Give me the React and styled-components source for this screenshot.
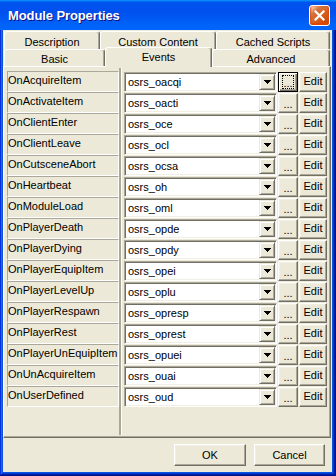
import React from "react";
import styled, { createGlobalStyle, css } from "styled-components";

const GlobalStyle = createGlobalStyle`
  html, body {
    margin: 0;
    padding: 0;
    background: #fff;
  }
  body {
    font-family: "Liberation Sans", Arial, sans-serif;
  }
`;

const raised = css`
  background: #ece9d8;
  border: 1px solid;
  border-color: #fff #716f64 #716f64 #fff;
  box-shadow: inset -1px -1px #aca899, inset 1px 1px #f1efe2;
`;

const Window = styled.div`
  width: 336px;
  height: 476px;
  box-sizing: border-box;
  display: flex;
  flex-direction: column;
  padding: 0 4px 4px 3px;
  background: #0855dd;
  box-shadow: inset -1px -1px #00138c, inset 1px 1px #0831d9,
    inset -2px -2px #001ea0, inset 2px 2px #166aee, inset -3px -3px #003bda;
  font-family: "Liberation Sans", Arial, sans-serif;
  font-size: 11px;
  color: #000;
`;

const TitleBar = styled.div`
  height: 30px;
  flex: none;
  margin: 0 -4px 0 -3px;
  padding: 0 6px 0 8px;
  display: flex;
  align-items: center;
  background: linear-gradient(
    180deg,
    #0997ff,
    #0053ee 8%,
    #0050ee 40%,
    #0062f7 80%,
    #0066ff 100%
  );
`;

const Title = styled.div`
  flex: 1;
  color: #fff;
  font-weight: bold;
  font-size: 13px;
  letter-spacing: -0.1px;
  text-shadow: 1px 1px #0f1089;
  padding-top: 1px;
`;

const CloseButton = styled.div`
  width: 21px;
  height: 21px;
  box-sizing: border-box;
  border: 1px solid #fff;
  border-radius: 3px;
  display: grid;
  place-items: center;
  background: radial-gradient(
    circle at 90% 90%,
    #cc4600 0%,
    #dc6527 55%,
    #cd7546 70%,
    #ffccb2 90%,
    #fff 100%
  );
  box-shadow: inset 0 -1px 2px 1px #da4600;
`;

const Client = styled.div`
  flex: 1;
  display: flex;
  flex-direction: column;
  padding-top: 1px;
  background: #ece9d8;
`;

const TabRow = styled.div`
  display: flex;
  align-items: flex-end;
  height: ${(p) => p.$h}px;
  padding-left: 1px;
`;

const Tab = styled.div`
  box-sizing: border-box;
  width: ${(p) => p.$w}px;
  height: ${(p) => (p.$active ? 20 : p.$h)}px;
  padding-top: 2px;
  line-height: ${(p) => (p.$h === 18 && !p.$active ? 16 : 15)}px;
  background: #ece9d8;
  border-top: 1px solid #fff;
  border-left: 1px solid #fff;
  border-right: 1px solid #716f64;
  border-radius: 3px 3px 0 0;
  box-shadow: inset -1px 0 #aca899;
  text-align: center;
  white-space: nowrap;
  ${(p) =>
    p.$active &&
    css`
      position: relative;
      z-index: 1;
      margin-bottom: -1px;
    `}
`;

const Panel = styled.div`
  box-sizing: border-box;
  height: 372px;
  flex: none;
  margin-right: 1px;
  padding: 1px 0 2px 3px;
  display: flex;
  border-top: 1px solid #fff;
  border-left: 1px solid #fff;
  border-right: 1px solid #716f64;
  border-bottom: 1px solid #716f64;
  box-shadow: inset -1px -1px #aca899;
`;

const LabelColumn = styled.div`
  width: 112px;
  padding-top: 3px;
  display: flex;
  flex-direction: column;
`;

const Splitter = styled.div`
  width: 3px;
  background: linear-gradient(90deg, #aca899 0 2px, #fff 2px 3px);
`;

const ControlColumn = styled.div`
  flex: 1;
  padding: 3px 0 0 2px;
  display: flex;
  flex-direction: column;
`;

const Label = styled.div`
  box-sizing: border-box;
  height: 21px;
  border: 1px solid;
  border-color: #aca899 #fff #fff #aca899;
  line-height: 17px;
  white-space: nowrap;
`;

const ControlRow = styled.div`
  height: 21px;
  box-sizing: border-box;
  padding-top: 1px;
  display: flex;
  gap: 1px;
`;

const Combo = styled.div`
  box-sizing: border-box;
  width: 153px;
  height: 20px;
  display: flex;
  background: #fff;
  border: 1px solid;
  border-color: #aca899 #fff #fff #aca899;
  box-shadow: inset 1px 1px #716f64, inset -1px -1px #f1efe2;
`;

const ComboText = styled.div`
  flex: 1;
  padding: 1px 0 0 3px;
  line-height: 16px;
  white-space: nowrap;
`;

const DropButton = styled.div`
  box-sizing: border-box;
  width: 16px;
  height: 16px;
  margin: 1px 1px 1px 0;
  display: grid;
  place-items: center;
  background: #ece9d8;
  border: 1px solid;
  border-color: #ece9d8 #716f64 #716f64 #ece9d8;
  box-shadow: inset 1px 1px #fff, inset -1px -1px #aca899;
`;

const DotsButton = styled.div`
  ${raised};
  box-sizing: border-box;
  width: 20px;
  height: 20px;
  padding-top: 2px;
  line-height: 16px;
  text-align: center;
  ${(p) =>
    p.$focused &&
    css`
      position: relative;
      border-color: #000;
      box-shadow: inset 1px 1px #fff, inset -1px -1px #716f64,
        inset -2px -2px #aca899;
      &::after {
        content: "";
        position: absolute;
        inset: 2px 3px 2px 3px;
        border: 1px dotted #000;
      }
    `}
`;

const EditButton = styled.div`
  ${raised};
  box-sizing: border-box;
  width: 28px;
  height: 20px;
  line-height: 16px;
  text-align: center;
`;

const Footer = styled.div`
  display: flex;
  justify-content: flex-end;
  gap: 8px;
  padding: 6px 7px 0 0;
`;

const DialogButton = styled.div`
  ${raised};
  box-sizing: border-box;
  width: ${(p) => p.$w}px;
  height: 22px;
  line-height: 20px;
  text-align: center;
`;

const events = [
  ["OnAcquireItem", "osrs_oacqi"],
  ["OnActivateItem", "osrs_oacti"],
  ["OnClientEnter", "osrs_oce"],
  ["OnClientLeave", "osrs_ocl"],
  ["OnCutsceneAbort", "osrs_ocsa"],
  ["OnHeartbeat", "osrs_oh"],
  ["OnModuleLoad", "osrs_oml"],
  ["OnPlayerDeath", "osrs_opde"],
  ["OnPlayerDying", "osrs_opdy"],
  ["OnPlayerEquipItem", "osrs_opei"],
  ["OnPlayerLevelUp", "osrs_oplu"],
  ["OnPlayerRespawn", "osrs_opresp"],
  ["OnPlayerRest", "osrs_oprest"],
  ["OnPlayerUnEquipItem", "osrs_opuei"],
  ["OnUnAcquireItem", "osrs_ouai"],
  ["OnUserDefined", "osrs_oud"],
];

const Arrow = () => (
  <svg width="7" height="4" viewBox="0 0 7 4" shapeRendering="crispEdges">
    <path d="M0 0H7V1H6V2H5V3H4V4H3V3H2V2H1V1H0Z" fill="#000" />
  </svg>
);

export default function App() {
  return (
    <>
      <GlobalStyle />
      <Window>
        <TitleBar>
          <Title>Module Properties</Title>
          <CloseButton>
            <svg width="11" height="11" viewBox="0 0 11 11">
              <path
                d="M1.5 1.5L9.5 9.5M9.5 1.5L1.5 9.5"
                stroke="#fff"
                strokeWidth="2.2"
                strokeLinecap="square"
              />
            </svg>
          </CloseButton>
        </TitleBar>
        <Client>
          <TabRow $h={18}>
            <Tab $w={96} $h={18}>Description</Tab>
            <Tab $w={116} $h={18}>Custom Content</Tab>
            <Tab $w={114} $h={18}>Cached Scripts</Tab>
          </TabRow>
          <TabRow $h={17}>
            <Tab $w={101} $h={17}>Basic</Tab>
            <Tab $w={107} $h={17} $active>
              Events
            </Tab>
            <Tab $w={118} $h={17}>Advanced</Tab>
          </TabRow>
          <Panel>
            <LabelColumn>
              {events.map(([name]) => (
                <Label key={name}>{name}</Label>
              ))}
            </LabelColumn>
            <Splitter />
            <ControlColumn>
              {events.map(([name, script], i) => (
                <ControlRow key={name}>
                  <Combo>
                    <ComboText>{script}</ComboText>
                    <DropButton>
                      <Arrow />
                    </DropButton>
                  </Combo>
                  <DotsButton $focused={i === 0}>...</DotsButton>
                  <EditButton>Edit</EditButton>
                </ControlRow>
              ))}
            </ControlColumn>
          </Panel>
          <Footer>
            <DialogButton $w={72}>OK</DialogButton>
            <DialogButton $w={71}>Cancel</DialogButton>
          </Footer>
        </Client>
      </Window>
    </>
  );
}
